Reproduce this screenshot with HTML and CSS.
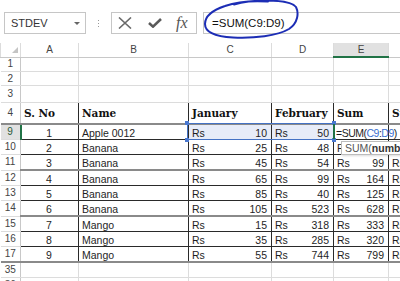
FILE: index.html
```html
<!DOCTYPE html>
<html>
<head>
    <title>Excel SUM formula</title>
    <link rel="stylesheet" href="styles.css">
</head>
<body>
    <!-- formula bar -->
    <div class="toolbar">
        <div class="namebox"><span>STDEV</span><span class="caret"></span></div>
        <div class="grip"><i></i><i></i><i></i></div>
        <div class="fbuttons">
            <svg class="ico-x" width="14" height="12" viewBox="0 0 14 12"><path d="M1 0.5 L13 11.5 M13 0.5 L1 11.5" stroke="#6a6a6a" stroke-width="1.6" fill="none"/></svg>
            <svg class="ico-ok" width="14" height="10" viewBox="0 0 14 10"><path d="M1 5 L5 8.6 L13 1" stroke="#5a5a5a" stroke-width="2.6" fill="none"/></svg>
            <span class="fx">fx</span>
        </div>
        <div class="formula">=SUM(C9:D9)</div>
        <svg class="scribble" width="400" height="43" viewBox="0 0 400 43">
            <path d="M268 1.5 C252 0.5 236 2 225 6 C213 10 205 16 205 24 C205 32 215 36.5 233 37.5 C254 38.5 277 36 289 29 C298 23 299 13 296 7 C292 2 282 0.8 268 0.6 C256 0.5 244 1.5 234 4.5" stroke="#1c2db5" stroke-width="2" fill="none" stroke-linecap="round"/>
        </svg>
    </div>

    <!-- sheet -->
    <div class="grid">
        <table class="sheet">
            <colgroup>
                <col class="w-rh"><col class="w-a"><col class="w-b"><col class="w-c"><col class="w-d"><col class="w-e"><col class="w-f">
            </colgroup>
            <tr class="colhead">
                <td class="corner"><svg width="20" height="13" viewBox="0 0 20 13"><polygon points="11,10 17,4 17,10" fill="#c4c4c4"/></svg></td>
                <td>A</td><td>B</td><td>C</td><td>D</td><td class="sel">E</td><td>F</td>
            </tr>
            <tr class="r-s"><td class="rh">1</td><td></td><td></td><td></td><td></td><td></td><td></td></tr>
            <tr class="r-s"><td class="rh">2</td><td></td><td></td><td></td><td></td><td></td><td></td></tr>
            <tr class="r-3"><td class="rh">3</td><td></td><td></td><td></td><td></td><td></td><td></td></tr>
            <tr class="r-head hidden-below">
                <td class="rh">4</td>
                <td class="t hd">S. No</td><td class="t hd">Name</td><td class="t hd">January</td><td class="t hd">February</td><td class="t hd">Sum</td><td class="t hd">Sum</td>
            </tr>
            <tr class="r-d">
                <td class="rh sel">9</td>
                <td class="t num">1</td><td class="t">Apple 0012</td>
                <td class="t ref"><div class="acc"><span>Rs</span><span>10</span></div></td>
                <td class="t ref"><div class="acc"><span>Rs</span><span>50</span></div></td>
                <td class="t edit">=SUM(<span class="blue">C9</span>:<span class="blue">D9</span>)</td>
                <td class="t"></td>
            </tr>
            <tr class="r-d">
                <td class="rh">10</td>
                <td class="t num">2</td><td class="t">Banana</td>
                <td class="t"><div class="acc"><span>Rs</span><span>25</span></div></td>
                <td class="t"><div class="acc"><span>Rs</span><span>48</span></div></td>
                <td class="t"><div class="acc"><span>Rs</span><span>73</span></div></td>
                <td class="t"><div class="acc"><span>Rs</span><span>73</span></div></td>
            </tr>
            <tr class="r-d heavy">
                <td class="rh">11</td>
                <td class="t num">3</td><td class="t">Banana</td>
                <td class="t"><div class="acc"><span>Rs</span><span>45</span></div></td>
                <td class="t"><div class="acc"><span>Rs</span><span>54</span></div></td>
                <td class="t"><div class="acc"><span>Rs</span><span>99</span></div></td>
                <td class="t"><div class="acc"><span>Rs</span><span>99</span></div></td>
            </tr>
            <tr class="r-d">
                <td class="rh">12</td>
                <td class="t num">4</td><td class="t">Banana</td>
                <td class="t"><div class="acc"><span>Rs</span><span>65</span></div></td>
                <td class="t"><div class="acc"><span>Rs</span><span>99</span></div></td>
                <td class="t"><div class="acc"><span>Rs</span><span>164</span></div></td>
                <td class="t"><div class="acc"><span>Rs</span><span>164</span></div></td>
            </tr>
            <tr class="r-d">
                <td class="rh">13</td>
                <td class="t num">5</td><td class="t">Banana</td>
                <td class="t"><div class="acc"><span>Rs</span><span>85</span></div></td>
                <td class="t"><div class="acc"><span>Rs</span><span>40</span></div></td>
                <td class="t"><div class="acc"><span>Rs</span><span>125</span></div></td>
                <td class="t"><div class="acc"><span>Rs</span><span>125</span></div></td>
            </tr>
            <tr class="r-d heavy">
                <td class="rh">14</td>
                <td class="t num">6</td><td class="t">Banana</td>
                <td class="t"><div class="acc"><span>Rs</span><span>105</span></div></td>
                <td class="t"><div class="acc"><span>Rs</span><span>523</span></div></td>
                <td class="t"><div class="acc"><span>Rs</span><span>628</span></div></td>
                <td class="t"><div class="acc"><span>Rs</span><span>628</span></div></td>
            </tr>
            <tr class="r-d">
                <td class="rh">15</td>
                <td class="t num">7</td><td class="t">Mango</td>
                <td class="t"><div class="acc"><span>Rs</span><span>15</span></div></td>
                <td class="t"><div class="acc"><span>Rs</span><span>318</span></div></td>
                <td class="t"><div class="acc"><span>Rs</span><span>333</span></div></td>
                <td class="t"><div class="acc"><span>Rs</span><span>333</span></div></td>
            </tr>
            <tr class="r-d">
                <td class="rh">16</td>
                <td class="t num">8</td><td class="t">Mango</td>
                <td class="t"><div class="acc"><span>Rs</span><span>35</span></div></td>
                <td class="t"><div class="acc"><span>Rs</span><span>285</span></div></td>
                <td class="t"><div class="acc"><span>Rs</span><span>320</span></div></td>
                <td class="t"><div class="acc"><span>Rs</span><span>320</span></div></td>
            </tr>
            <tr class="r-d hidden-below">
                <td class="rh">17</td>
                <td class="t num">9</td><td class="t">Mango</td>
                <td class="t"><div class="acc"><span>Rs</span><span>55</span></div></td>
                <td class="t"><div class="acc"><span>Rs</span><span>744</span></div></td>
                <td class="t"><div class="acc"><span>Rs</span><span>799</span></div></td>
                <td class="t"><div class="acc"><span>Rs</span><span>799</span></div></td>
            </tr>
            <tr class="r-d"><td class="rh">35</td><td></td><td></td><td></td><td></td><td></td><td></td></tr>
            <tr class="r-d"><td class="rh">36</td><td></td><td></td><td></td><td></td><td></td><td></td></tr>
        </table>

        <!-- range picked by the formula -->
        <div class="range">
            <i class="h tl"></i><i class="h bl"></i><i class="h tr"></i><i class="h br"></i>
        </div>
        <div class="active"></div>
        <div class="tip">SUM(<b>number1</b>, [number2], ...)</div>
    </div>
</body>
</html>
```
FILE: styles.css
```css
body {
    margin: 0;
    width: 400px;
    height: 281px;
    overflow: hidden;
    background-color: #fff;
    font-family: "Liberation Sans", Arial, sans-serif;
}

/* formula bar */
.toolbar {
    position: relative;
    height: 43px;
    box-sizing: border-box;
    padding-top: 12px;
    display: flex;
    align-items: flex-start;
}

.namebox {
    margin-left: 4px;
    width: 82px;
    height: 22px;
    box-sizing: border-box;
    border: 1px solid #c6c6c6;
    display: flex;
    align-items: center;
    justify-content: space-between;
    padding: 0 5px 0 6px;
    font-size: 11px;
    color: #333;
}

.caret {
    width: 0;
    height: 0;
    border-left: 3px solid transparent;
    border-right: 3px solid transparent;
    border-top: 3px solid #666;
}

.grip {
    width: 25px;
    height: 22px;
    display: flex;
    flex-direction: column;
    align-items: center;
    justify-content: center;
    gap: 2px;
}

.grip i {
    width: 1px;
    height: 1px;
    background-color: #999;
}

.fbuttons {
    width: 86px;
    height: 22px;
    box-sizing: border-box;
    border: 1px solid #c6c6c6;
    display: flex;
    align-items: center;
    padding-left: 6px;
}

.ico-ok {
    margin-left: 16px;
}

.fx {
    margin-left: 14px;
    font-family: "Liberation Serif", "Times New Roman", serif;
    font-style: italic;
    font-size: 16px;
    color: #555;
}

.formula {
    margin-left: 6px;
    flex: 1;
    height: 22px;
    box-sizing: border-box;
    border: 1px solid #c6c6c6;
    border-right: none;
    padding-left: 8px;
    display: flex;
    align-items: center;
    font-size: 11.5px;
    color: #111;
}

.scribble {
    position: absolute;
    left: 0;
    top: 0;
}

/* sheet */
.grid {
    position: relative;
}

.sheet {
    border-collapse: collapse;
    table-layout: fixed;
    width: 428px;
}

.w-rh { width: 20px; }
.w-a { width: 58px; }
.w-b { width: 110px; }
.w-c { width: 83px; }
.w-d { width: 62px; }
.w-e { width: 55px; }
.w-f { width: 40px; }

.sheet td {
    padding: 0 4px 0 3px;
    border: 1px solid #dcdcdc;
    font-size: 10.5px;
    line-height: 12px;
    color: #1e1e1e;
    white-space: nowrap;
    overflow: hidden;
    vertical-align: bottom;
}

.colhead td {
    height: 13px;
    padding: 0;
    border-top: none;
    border-bottom: 1px solid #c8c8c8;
    text-align: center;
    vertical-align: middle;
    color: #444;
    font-size: 10px;
}

.colhead td.corner {
    text-align: left;
    line-height: 0;
}

.colhead td.sel {
    background-color: #e1e1e1;
    border-bottom: 2px solid #217346;
}

.sheet td.rh {
    padding: 0;
    border-left: none;
    border-right: 1px solid #c8c8c8;
    text-align: center;
    color: #444;
    font-size: 10px;
    vertical-align: middle;
}

.sheet td.rh.sel {
    background-color: #e1e1e1;
    border-right: 2px solid #217346;
    color: #2a5a3c;
}

.r-s td { height: 13px; }
.r-3 td { height: 16px; }
.r-head td { height: 20px; }
.r-d td { height: 14px; }

.sheet td.t {
    border-color: #2a2a2a;
}

.sheet .heavy td.t,
.sheet .hidden-below td {
    border-bottom: 2px solid #8a8a8a;
}

.sheet td.hd {
    font-family: "DejaVu Serif", Georgia, serif;
    font-weight: bold;
    font-size: 10.5px;
    color: #111;
    vertical-align: middle;
}

.sheet td.num {
    text-align: center;
}

.sheet td.ref {
    background-color: #e7ecf8;
}

.acc {
    display: flex;
    justify-content: space-between;
}

.sheet td.edit {
    overflow: visible;
    padding-left: 2px;
    letter-spacing: -0.5px;
}

.blue {
    color: #3b6fd0;
}

/* overlays */
.range {
    position: absolute;
    left: 187px;
    top: 80px;
    width: 147px;
    height: 17px;
    box-sizing: border-box;
    border: 1px solid #4472c4;
}

.h {
    position: absolute;
    width: 4px;
    height: 4px;
    background-color: #4a78d0;
}

.tl { left: -3px; top: -3px; }
.bl { left: -3px; bottom: -3px; }
.tr { right: -3px; top: -3px; }
.br { right: -3px; bottom: -3px; }

.active {
    position: absolute;
    left: 333px;
    top: 81px;
    width: 2px;
    height: 15px;
    background-color: #217346;
}

.tip {
    position: absolute;
    left: 341px;
    top: 98px;
    height: 14px;
    box-sizing: border-box;
    padding: 0 3px;
    border: 1px solid #bcbcbc;
    background-color: #fff;
    font-size: 10.5px;
    line-height: 12px;
    color: #555;
    white-space: nowrap;
    box-shadow: 1px 1px 2px rgba(0, 0, 0, 0.15);
}

.tip b {
    color: #333;
}
```
